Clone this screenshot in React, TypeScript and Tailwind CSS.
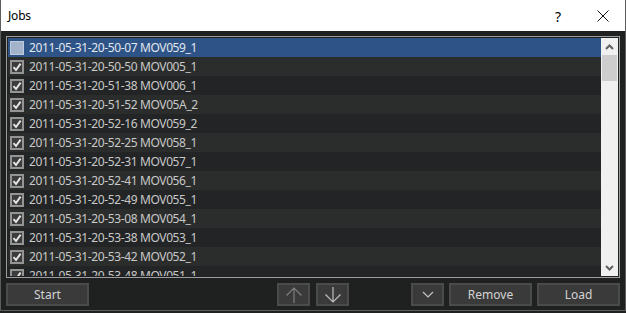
import React from "react";

const rows = [
  "2011-05-31-20-50-07 MOV059_1",
  "2011-05-31-20-50-50 MOV005_1",
  "2011-05-31-20-51-38 MOV006_1",
  "2011-05-31-20-51-52 MOV05A_2",
  "2011-05-31-20-52-16 MOV059_2",
  "2011-05-31-20-52-25 MOV058_1",
  "2011-05-31-20-52-31 MOV057_1",
  "2011-05-31-20-52-41 MOV056_1",
  "2011-05-31-20-52-49 MOV055_1",
  "2011-05-31-20-53-08 MOV054_1",
  "2011-05-31-20-53-38 MOV053_1",
  "2011-05-31-20-53-42 MOV052_1",
  "2011-05-31-20-53-48 MOV051_1",
];

function CheckBox({ checked, selected }: { checked: boolean; selected: boolean }) {
  if (selected && !checked) {
    return <div className="w-[14px] h-[14px] shrink-0 border border-[#bccade] bg-[#a3b3cb]" />;
  }
  return (
    <div className="w-[14px] h-[14px] shrink-0 border-2 border-[#949494] bg-[#3c3c3c] flex items-center justify-center">
      <svg width="10" height="10" viewBox="0 0 10 10">
        <path d="M1.5 5.2 L4 8 L8.6 1.6" fill="none" stroke="#e4e4e4" strokeWidth="2" />
      </svg>
    </div>
  );
}

function Btn({ w, children }: { w: string; children?: React.ReactNode }) {
  return (
    <div className={`${w} h-[23px] shrink-0 border-2 border-[#4b4b4b] bg-[#3a3a3a] flex items-center justify-center text-[12px] text-[#d2d2d2]`}>
      {children}
    </div>
  );
}

export default function App() {
  return (
    <div className="w-[626px] h-[313px] bg-[#1f2020] overflow-hidden" style={{ fontFamily: '"Noto Sans", "Open Sans", sans-serif' }}>
      <div className="w-[626px] h-[311px] border-x border-b border-[#5e5e5e] flex flex-col">
        <div className="h-[31px] shrink-0 bg-white flex items-center relative">
          <span className="ml-[7px] text-[12px] text-black tracking-[-0.2px]">Jobs</span>
          <span className="absolute left-[554px] top-[6px] text-[14px] text-black">?</span>
          <svg className="absolute left-[596px] top-[10px]" width="12" height="12" viewBox="0 0 12 12">
            <path d="M0.5 0.5 L11.5 11.5 M11.5 0.5 L0.5 11.5" stroke="#111" strokeWidth="1" />
          </svg>
        </div>
        <div className="flex-1 flex flex-col px-[5px] pt-[5px] pb-[4px] gap-[5px]">
          <div className="h-[242px] border border-[#9c9ca2] p-[1px] flex">
            <div className="flex-1 overflow-hidden">
              {rows.map((r, i) => {
                const sel = i === 0;
                const bg = sel ? "bg-[#2e5386]" : i % 2 === 1 ? "bg-[#2b2d2c]" : "bg-[#222425]";
                return (
                  <div key={r} className={`h-[19px] flex items-center ${bg}`}>
                    <div className="ml-[2px] mr-[5px]">
                      <CheckBox checked={!sel} selected={sel} />
                    </div>
                    <span className={`text-[12px] tracking-[-0.38px] whitespace-nowrap ${sel ? "text-[#e2e8f0]" : "text-[#c8c8c8]"}`}>{r}</span>
                  </div>
                );
              })}
            </div>
            <div className="w-[17px] bg-[#f0f0f0] flex flex-col">
              <div className="h-[17px] flex items-center justify-center">
                <svg width="9" height="6" viewBox="0 0 9 6">
                  <path d="M1 5 L4.5 1.5 L8 5" fill="none" stroke="#606060" strokeWidth="2" />
                </svg>
              </div>
              <div className="h-[26px] mx-[1px] bg-[#cdcdcd]" />
              <div className="flex-1" />
              <div className="h-[17px] flex items-center justify-center">
                <svg width="9" height="6" viewBox="0 0 9 6">
                  <path d="M1 1 L4.5 4.5 L8 1" fill="none" stroke="#606060" strokeWidth="2" />
                </svg>
              </div>
            </div>
          </div>
          <div className="flex h-[23px]">
            <Btn w="w-[83px]">Start</Btn>
            <div className="ml-[188px]">
              <Btn w="w-[33px]">
                <svg width="18" height="16" viewBox="0 0 18 16">
                  <path d="M9 1 V16 M1.5 8.5 L9 1 L16.5 8.5" fill="none" stroke="#7e7e7e" strokeWidth="1.2" />
                </svg>
              </Btn>
            </div>
            <div className="ml-[6px]">
              <Btn w="w-[33px]">
                <svg width="18" height="16" viewBox="0 0 18 16">
                  <path d="M9 0 V15 M1.5 7.5 L9 15 L16.5 7.5" fill="none" stroke="#bdbdbd" strokeWidth="1.2" />
                </svg>
              </Btn>
            </div>
            <div className="ml-[62px]">
              <Btn w="w-[33px]">
                <svg width="12" height="7" viewBox="0 0 12 7">
                  <path d="M1 1 L6 6 L11 1" fill="none" stroke="#c4c4c4" strokeWidth="1.2" />
                </svg>
              </Btn>
            </div>
            <div className="ml-[5px]">
              <Btn w="w-[83px]">Remove</Btn>
            </div>
            <div className="ml-[5px]">
              <Btn w="w-[83px]">Load</Btn>
            </div>
          </div>
        </div>
      </div>
    </div>
  );
}
